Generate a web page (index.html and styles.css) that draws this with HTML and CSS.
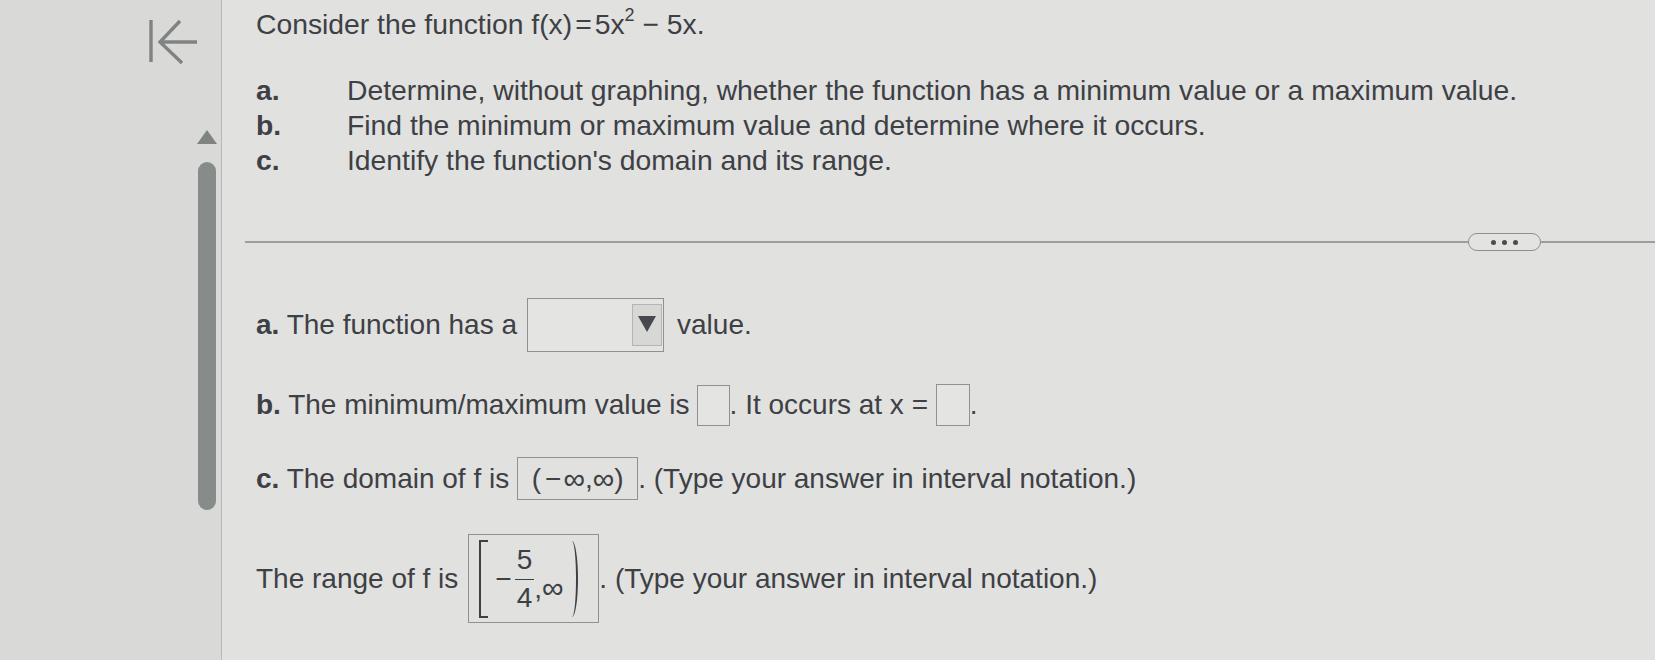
FILE: index.html
```html
<!DOCTYPE html>
<html>
<head>
<meta charset="utf-8">
<link rel="stylesheet" href="styles.css">
</head>
<body>
<div class="app">
  <aside class="side">
    <svg class="back-icon" width="56" height="50" viewBox="0 0 56 50">
      <line x1="5" y1="4" x2="5" y2="46" stroke="#7f8382" stroke-width="3.4"/>
      <line x1="14" y1="26" x2="51" y2="26" stroke="#7f8382" stroke-width="3.4"/>
      <polyline points="34,5 14,26 36,47" fill="none" stroke="#7f8382" stroke-width="3.4"/>
    </svg>
    <div class="scroller">
      <svg class="scroll-up" width="20" height="14" viewBox="0 0 20 14">
        <polygon points="10,0 20,14 0,14" fill="#7f8483"/>
      </svg>
      <div class="thumb"></div>
    </div>
  </aside>
  <main class="main">
    <section class="question">
      <p class="title">Consider the function f(x)<span class="eq">=</span>5x<sup>2</sup> − 5x.</p>
      <div class="items">
        <span class="lbl">a.</span><span>Determine, without graphing, whether the function has a minimum value or a maximum value.</span>
        <span class="lbl">b.</span><span>Find the minimum or maximum value and determine where it occurs.</span>
        <span class="lbl">c.</span><span>Identify the function's domain and its range.</span>
      </div>
    </section>
    <div class="sep">
      <div class="rule"></div>
      <div class="pill"><i></i><i></i><i></i></div>
      <div class="rule tail"></div>
    </div>
    <section class="answers">
      <div class="row row-a">
        <span class="txt"><b>a.</b> The function has a</span>
        <span class="select"><span class="select-btn"><svg width="18" height="16" viewBox="0 0 18 16"><polygon points="0,0 18,0 9,16" fill="#45484c"/></svg></span></span>
        <span class="txt">value.</span>
      </div>
      <div class="row row-b">
        <span class="txt"><b>b.</b> The minimum/maximum value is</span>
        <span class="box box1"></span>
        <span class="txt">. It occurs at x = </span>
        <span class="box box2"></span>
        <span class="txt">.</span>
      </div>
      <div class="row row-c">
        <span class="txt"><b>c.</b> The domain of f is</span>
        <span class="ans dom">(<span class="m">−</span><span class="inf-g">∞</span>,<span class="inf-g">∞</span>)</span>
        <span class="txt">. (Type your answer in interval notation.)</span>
      </div>
      <div class="row row-r">
        <span class="txt">The range of f is</span>
        <span class="ans rng"><span class="brk"></span><span class="neg">−</span><span class="frac"><span class="num">5</span><span class="den">4</span></span><span class="inf">,<span class="inf-g">∞</span></span><span class="par"></span></span>
        <span class="txt">. (Type your answer in interval notation.)</span>
      </div>
    </section>
  </main>
</div>
</body>
</html>
```

FILE: styles.css
```css
html, body {
  margin: 0;
  padding: 0;
}
body {
  width: 1655px;
  height: 660px;
  overflow: hidden;
  background: #e0e0de;
  font-family: "Liberation Sans", Arial, sans-serif;
  color: #3d4045;
}
.app {
  display: flex;
  height: 660px;
}
.side {
  width: 221px;
  flex: none;
  background: #d9d9d7;
  border-right: 1px solid #b8b9b7;
  display: flex;
  flex-direction: column;
}
.back-icon {
  display: block;
  margin: 16px 0 0 146px;
}
.scroller {
  margin: 64px 0 0 197px;
  width: 20px;
  display: flex;
  flex-direction: column;
  align-items: center;
}
.scroll-up {
  display: block;
}
.thumb {
  margin-top: 18px;
  width: 18px;
  height: 348px;
  border-radius: 9px;
  background: #878b8a;
}
.main {
  flex: 1;
  background: #e1e1df;
  padding-top: 9px;
}
.question {
  padding-left: 34px;
  font-size: 28.3px;
}
.title {
  margin: 0;
  line-height: 30px;
}
.title sup {
  font-size: 18px;
  line-height: 0;
  vertical-align: 13px;
}
.eq {
  padding: 0 3px;
}
.items {
  margin-top: 34px;
  display: grid;
  grid-template-columns: 91px 1fr;
  line-height: 35px;
}
.lbl {
  font-weight: bold;
}
.sep {
  margin-top: 55px;
  margin-left: 23px;
  height: 18px;
  display: flex;
  align-items: center;
}
.rule {
  flex: 1;
  height: 0;
  border-top: 2px solid #9c9e9d;
}
.rule.tail {
  flex: none;
  width: 114px;
}
.pill {
  width: 71px;
  height: 16px;
  border: 1.5px solid #8e908f;
  border-radius: 9px;
  display: flex;
  align-items: center;
  justify-content: center;
  gap: 6px;
  background: #e3e3e1;
}
.pill i {
  width: 5px;
  height: 5px;
  border-radius: 50%;
  background: #4a4d50;
}
.answers {
  padding-left: 34px;
  font-size: 28px;
}
.row {
  display: flex;
  align-items: center;
}
.txt {
  white-space: pre;
  line-height: 32px;
}
.row-a {
  margin-top: 47px;
  height: 54px;
}
.select {
  width: 137px;
  height: 54px;
  margin: 0 13px 0 10px;
  border: 1px solid #8f9190;
  background: #e4e4e2;
  box-sizing: border-box;
  display: flex;
  justify-content: flex-end;
  align-items: center;
  padding-right: 1px;
}
.select-btn {
  width: 30px;
  height: 42px;
  border: 1px solid #b4b6b5;
  background: #d7d8d6;
  display: flex;
  justify-content: center;
  padding-top: 11px;
  box-sizing: border-box;
}
.select-btn svg {
  display: block;
}
.row-b {
  margin-top: 32px;
  height: 42px;
}
.box {
  display: block;
  width: 33px;
  height: 41px;
  border: 1px solid #8f9291;
  box-sizing: border-box;
  background: #e4e4e2;
}
.box1 {
  margin-left: 7px;
}
.box2 {
  width: 34px;
  height: 42px;
}
.row-c {
  margin-top: 31px;
  height: 43px;
}
.ans {
  display: flex;
  align-items: center;
  border: 1px solid #8f9291;
  box-sizing: border-box;
  margin-left: 8px;
}
.inf-g {
  font-size: 1.08em;
}
.dom {
  width: 121px;
  height: 43px;
  justify-content: center;
  white-space: pre;
  font-size: 28px;
}
.dom .m {
  padding: 0 2px 0 4px;
}
.row-r {
  margin-top: 34px;
  height: 89px;
}
.rng {
  width: 131px;
  height: 89px;
  margin-left: 10px;
  padding: 0 0 0 10px;
  font-size: 28px;
}
.brk {
  display: block;
  width: 7px;
  height: 74px;
  border: 2px solid #3d4045;
  border-right: none;
  margin-right: 7px;
}
.neg {
  margin-right: 3px;
}
.frac {
  display: flex;
  flex-direction: column;
  align-items: center;
  line-height: 32px;
}
.num {
  border-bottom: 1.5px solid #3d4045;
  padding: 0 2px 3px;
}
.den {
  padding-top: 2px;
}
.inf {
  margin-top: 18px;
}
.par {
  display: block;
  width: 10px;
  height: 76px;
  border-right: 2px solid #3d4045;
  border-radius: 0 50% 50% 0 / 0 50% 50% 0;
  margin-left: 2px;
}
```
